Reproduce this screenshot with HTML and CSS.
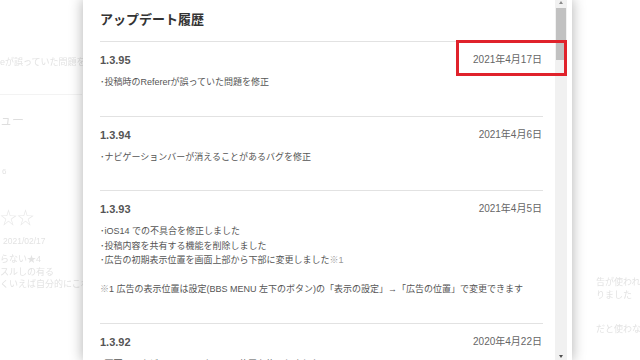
FILE: index.html
```html
<!DOCTYPE html>
<html lang="ja">
<head>
<meta charset="utf-8">
<title>アップデート履歴</title>
<link rel="stylesheet" href="styles.css">
</head>
<body>
<div class="bg">
  <div class="bg-left">
    <p class="bg-t1">eが誤っていた問題を修正</p>
    <div class="bg-rule"></div>
    <p class="bg-h">ュー</p>
    <p class="bg-s">6</p>
    <p class="bg-stars">☆☆</p>
    <p class="bg-date">2021/02/17</p>
    <p class="bg-line bg-first">らない★4</p>
    <p class="bg-line">スルしの有る</p>
    <p class="bg-line">くいえば自分的にこれ</p>
  </div>
  <div class="bg-right">
    <p class="bg-line">告が使われる(古</p>
    <p class="bg-line">りました</p>
    <p class="bg-line bg-r3">だと使わない</p>
  </div>
</div>

<div class="modal">
  <div class="modal-body">
    <h1 class="title">アップデート履歴</h1>

    <section class="entry">
      <div class="entry-head"><span class="ver">1.3.95</span><span class="date">2021年4月17日</span></div>
      <div class="notes">
        <p>･投稿時のRefererが誤っていた問題を修正</p>
      </div>
    </section>

    <section class="entry">
      <div class="entry-head"><span class="ver">1.3.94</span><span class="date">2021年4月6日</span></div>
      <div class="notes">
        <p>･ナビゲーションバーが消えることがあるバグを修正</p>
      </div>
    </section>

    <section class="entry">
      <div class="entry-head"><span class="ver">1.3.93</span><span class="date">2021年4月5日</span></div>
      <div class="notes">
        <p>･iOS14 での不具合を修正しました</p>
        <p>･投稿内容を共有する機能を削除しました</p>
        <p>･広告の初期表示位置を画面上部から下部に変更しました<span class="mark">※1</span></p>
        <p class="blank">&nbsp;</p>
        <p><span class="mark">※</span>1 広告の表示位置は設定(BBS MENU 左下のボタン)の「表示の設定」→「広告の位置」で変更できます</p>
      </div>
    </section>

    <section class="entry">
      <div class="entry-head"><span class="ver">1.3.92</span><span class="date">2020年4月22日</span></div>
      <div class="notes">
        <p>･画面ロックビューでのスクロール位置を修正しました</p>
      </div>
    </section>
  </div>
  <div class="scrollbar">
    <div class="sb-up"></div>
    <div class="sb-thumb"></div>
    <div class="sb-fill"></div>
    <div class="sb-down"></div>
  </div>
</div>

<div class="highlight"></div>
</body>
</html>
```

FILE: styles.css
```css
* { box-sizing: border-box; }
html, body {
  margin: 0;
  padding: 0;
}
body {
  width: 640px;
  height: 360px;
  overflow: hidden;
  position: relative;
  background: #fff;
  font-family: "Liberation Sans", "Noto Sans CJK JP", sans-serif;
}
p { margin: 0; }

/* faded page behind the dialog */
.bg {
  display: flex;
  justify-content: space-between;
  height: 360px;
  color: #e3e3e3;
  filter: blur(0.6px);
}
.bg-left {
  width: 82px;
  padding-top: 56px;
  white-space: nowrap;
}
.bg-right {
  width: 44px;
  overflow: hidden;
  padding-top: 276px;
  white-space: nowrap;
}
.bg-t1 { font-size: 9px; line-height: 12px; }
.bg-rule { height: 1px; background: #f3f3f3; margin-top: 26px; }
.bg-h { font-size: 12px; line-height: 16px; margin-top: 18px; color: #dedede; }
.bg-s { font-size: 8px; line-height: 10px; margin-top: 38px; margin-left: 2px; }
.bg-stars { font-size: 17px; line-height: 20px; margin-top: 32px; color: #e8e8e8; }
.bg-date { font-size: 8.5px; line-height: 12px; margin-top: 6px; margin-left: 3px; }
.bg-line { font-size: 9px; line-height: 12.5px; }
.bg-first { margin-top: 6px; }
.bg-r3 { margin-top: 22px; }

/* dialog */
.modal {
  position: absolute;
  left: 83px;
  top: 0;
  width: 489px;
  height: 360px;
  background: #fff;
  display: flex;
  padding-right: 5px;
  box-shadow: 0 0 12px 1px rgba(0, 0, 0, 0.28);
}
.modal-body {
  flex: 1;
  padding: 9px 12px 0 17px;
  overflow: hidden;
}
.title {
  margin: 0 0 12px;
  font-size: 13px;
  line-height: 20px;
  font-weight: bold;
  color: #333;
  font-family: "Noto Sans CJK JP", sans-serif;
}
.entry {
  border-top: 1px solid #e2e2e2;
  padding: 10px 0 26px;
}
.entry-head {
  display: flex;
  justify-content: space-between;
  align-items: center;
  height: 16px;
  margin-bottom: 7px;
}
.ver {
  font-size: 11px;
  font-weight: bold;
  color: #555;
  line-height: 16px;
}
.date {
  font-size: 10px;
  color: #666;
  line-height: 16px;
  padding-right: 1px;
}
.notes {
  font-size: 9px;
  line-height: 14.5px;
  color: #555;
}
.mark { color: #999; }
.blank { height: 14.5px; }

/* scrollbar */
.scrollbar {
  width: 12px;
  background: #f1f1f1;
  display: flex;
  flex-direction: column;
  align-items: center;
}
.sb-up {
  margin-top: 1px;
  width: 0;
  height: 0;
  border-left: 2.5px solid transparent;
  border-right: 2.5px solid transparent;
  border-bottom: 3px solid #8a8a8a;
}
.sb-thumb {
  margin-top: 4px;
  width: 10px;
  height: 52px;
  background: #c1c1c1;
}
.sb-fill { flex: 1; }
.sb-down {
  margin-bottom: 2px;
  width: 0;
  height: 0;
  border-left: 2.5px solid transparent;
  border-right: 2.5px solid transparent;
  border-top: 3px solid #505050;
}

/* annotation box */
.highlight {
  position: absolute;
  left: 456px;
  top: 40px;
  width: 111px;
  height: 36px;
  border: 3.5px solid #e0222b;
}
```
